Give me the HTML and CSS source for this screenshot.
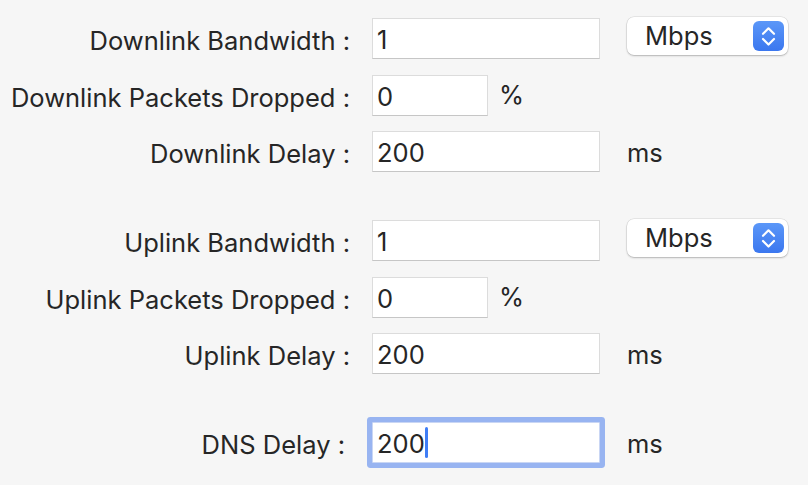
FILE: index.html
```html
<!DOCTYPE html>
<html>
<head>
<meta charset="utf-8">
<link rel="stylesheet" href="styles.css">
</head>
<body>
<div class="form">
  <div class="group">
    <div class="row">
      <div class="label">Downlink Bandwidth :</div>
      <div class="field wide"><span>1</span></div>
      <div class="popup">
        <span class="popup-text">Mbps</span>
        <span class="stepper">
          <svg width="31" height="30" viewBox="0 0 31 30"><path d="M10 12.8 L15.5 7.3 L21 12.8 M10 18 L15.5 23.5 L21 18" fill="none" stroke="#fff" stroke-width="2.2" stroke-linecap="round" stroke-linejoin="round"/></svg>
        </span>
      </div>
    </div>
    <div class="row">
      <div class="label">Downlink Packets Dropped :</div>
      <div class="field narrow"><span>0</span></div>
      <div class="unit pct">%</div>
    </div>
    <div class="row">
      <div class="label">Downlink Delay :</div>
      <div class="field wide"><span>200</span></div>
      <div class="unit">ms</div>
    </div>
  </div>
  <div class="group">
    <div class="row">
      <div class="label">Uplink Bandwidth :</div>
      <div class="field wide"><span>1</span></div>
      <div class="popup">
        <span class="popup-text">Mbps</span>
        <span class="stepper">
          <svg width="31" height="30" viewBox="0 0 31 30"><path d="M10 12.8 L15.5 7.3 L21 12.8 M10 18 L15.5 23.5 L21 18" fill="none" stroke="#fff" stroke-width="2.2" stroke-linecap="round" stroke-linejoin="round"/></svg>
        </span>
      </div>
    </div>
    <div class="row">
      <div class="label">Uplink Packets Dropped :</div>
      <div class="field narrow"><span>0</span></div>
      <div class="unit pct">%</div>
    </div>
    <div class="row">
      <div class="label">Uplink Delay :</div>
      <div class="field wide"><span>200</span></div>
      <div class="unit">ms</div>
    </div>
  </div>
  <div class="group">
    <div class="row">
      <div class="label dns">DNS Delay :</div>
      <div class="field wide focused"><span>200</span><span class="caret"></span></div>
      <div class="unit">ms</div>
    </div>
  </div>
</div>
</body>
</html>
```
FILE: styles.css
```css
html, body {
  margin: 0;
  padding: 0;
  background: #f6f6f6;
}
body {
  font-family: "Inter", "Noto Sans", sans-serif;
  font-size: 25.5px;
  color: #262626;
  width: 808px;
  height: 485px;
  overflow: hidden;
}
.form {
  padding-top: 18px;
  display: flex;
  flex-direction: column;
  gap: 48px;
}
.group {
  display: flex;
  flex-direction: column;
  gap: 15.5px;
}
.row {
  display: flex;
  align-items: center;
  height: 41px;
  line-height: 41px;
}
.label {
  box-sizing: border-box;
  width: 372px;
  padding-right: 22px;
  padding-top: 2px;
  text-align: right;
  white-space: nowrap;
  height: 41px;
}
.label.dns {
  padding-right: 27px;
}
.field {
  height: 41px;
  box-sizing: border-box;
  background: #fff;
  border: 1px solid #dcdcdc;
  border-bottom-color: #c6c6c6;
  padding: 2px 0 0 4px;
  line-height: 37px;
  display: flex;
  align-items: center;
}
.field.wide { width: 228px; }
.field.narrow { width: 116px; }
.field.focused {
  border-color: #c9d6f4;
  box-shadow: 0 0 0 5px #98b4f1;
  border-radius: 1px;
}
.caret {
  display: inline-block;
  width: 3px;
  height: 31px;
  margin-top: -2px;
  background: #3f7ef6;
  border-radius: 1.5px;
}
.unit {
  margin-left: 27px;
  height: 41px;
  padding-top: 2px;
}
.unit.pct {
  margin-left: 11px;
  padding-top: 0;
  margin-top: -2px;
}
.popup {
  margin-left: 27px;
  align-self: flex-start;
  margin-top: -1px;
  width: 161px;
  height: 38px;
  line-height: 38px;
  box-sizing: border-box;
  background: #fff;
  border-radius: 7px;
  box-shadow: 0 0 0 0.5px rgba(0,0,0,0.12), 0 1px 2px rgba(0,0,0,0.22);
  display: flex;
  align-items: center;
  justify-content: space-between;
  padding: 0 4px 0 18px;
}
.popup-text {
  height: 38px;
  margin-top: -1px;
}
.stepper {
  width: 31px;
  height: 30px;
  border-radius: 6px;
  background: linear-gradient(#5b97f8, #3b77ef);
  display: flex;
}
```
